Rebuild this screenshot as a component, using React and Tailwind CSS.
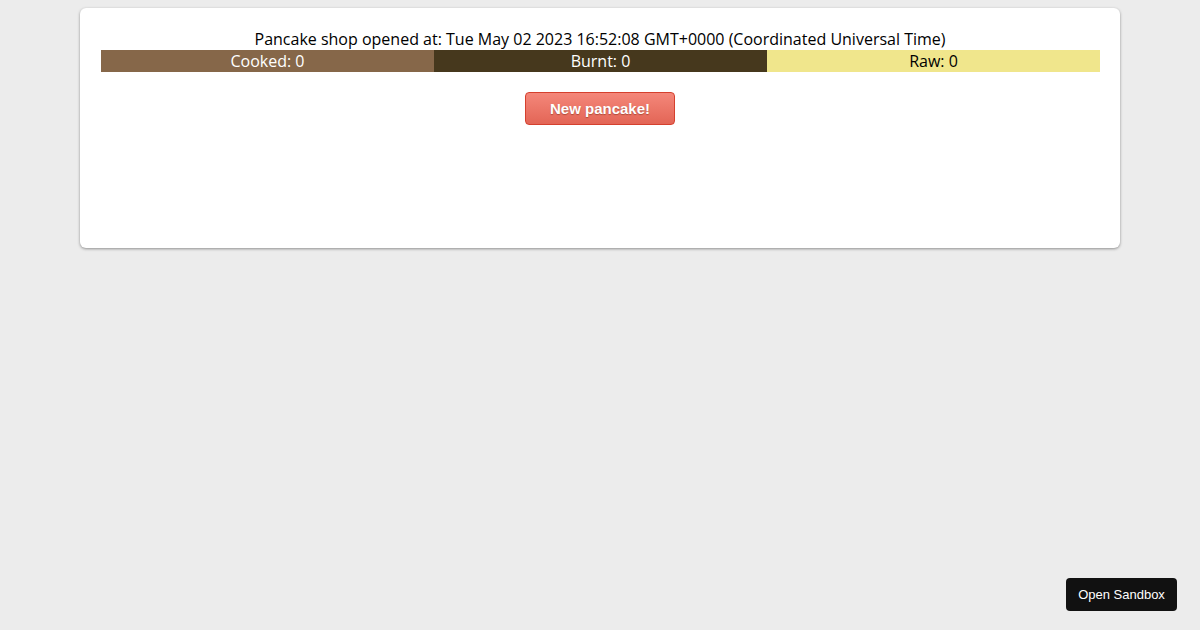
export default function App() {
  const counts = [
    { label: "Cooked", value: 0, cls: "bg-[#866749] text-white" },
    { label: "Burnt", value: 0, cls: "bg-[#46381d] text-white" },
    { label: "Raw", value: 0, cls: "bg-[#f0e68c] text-black" },
  ]

  return (
    <div className="min-h-screen w-full bg-[#ececec] pt-2 font-['Open_Sans',sans-serif]">
      {/* card */}
      <div className="mx-20 h-[240px] rounded-md bg-white px-[21px] pt-5 shadow-[0_1px_3px_rgba(0,0,0,0.4)]">
        <p className="text-center text-base leading-[22px] text-black">
          Pancake shop opened at: Tue May 02 2023 16:52:08 GMT+0000 (Coordinated Universal Time)
        </p>
        <div className="flex w-[999px] h-[22px]">
          {counts.map((c) => (
            <div
              key={c.label}
              className={`flex-1 flex items-center justify-center text-base leading-[22px] ${c.cls}`}
            >
              {c.label}: {c.value}
            </div>
          ))}
        </div>
        <div className="mt-5 flex justify-center">
          <button className="h-[33px] w-[150px] rounded border border-[#d5402e] bg-gradient-to-b from-[#f4877a] to-[#e36556] pt-px font-['Liberation_Sans',sans-serif] text-[15px] font-bold text-white [text-shadow:0_1px_1px_rgba(120,40,20,0.5)]">
            New pancake!
          </button>
        </div>
      </div>

      {/* sandbox badge */}
      <button className="fixed bottom-[19px] right-[23px] h-[33px] w-[111px] rounded bg-[#111] font-['Liberation_Sans',sans-serif] text-[13px] text-white">
        Open Sandbox
      </button>
    </div>
  )
}
